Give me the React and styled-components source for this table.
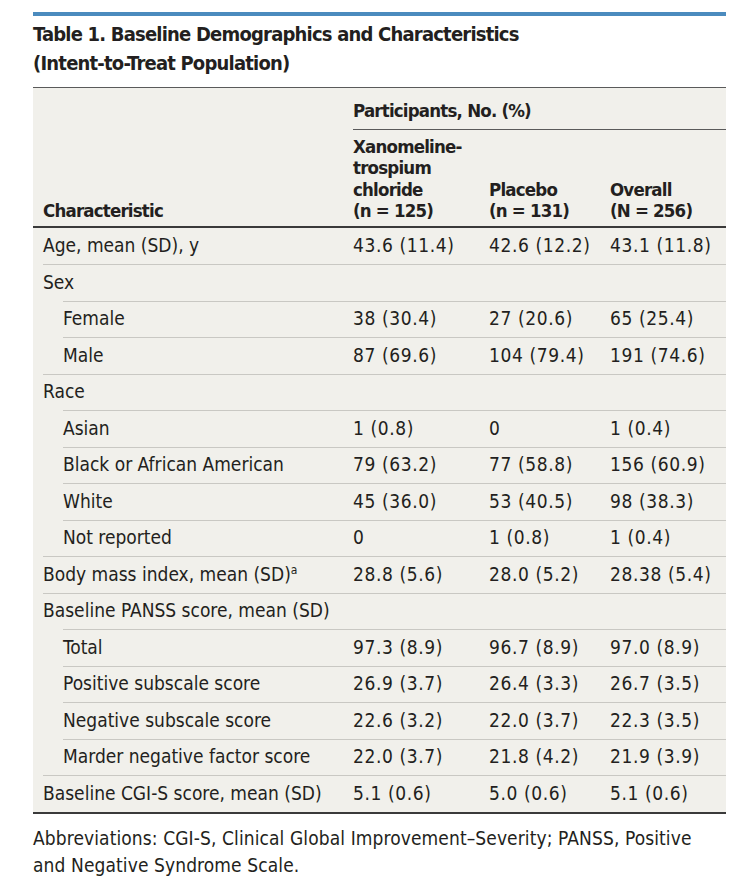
import React from 'react';
import styled, { createGlobalStyle } from 'styled-components';

const GlobalStyle = createGlobalStyle`
  html, body {
    margin: 0;
    padding: 0;
    background: #fff;
  }
  body {
    font-family: "DejaVu Sans Condensed", "DejaVu Sans", sans-serif;
    color: #231f20;
  }
`;

const Page = styled.div`
  width: 693px;
  padding: 12px 0 0 33px;
`;

const TopBar = styled.div`
  height: 4px;
  background: #4b8bbe;
`;

const Title = styled.h1`
  margin: 0;
  padding: 4px 0 9px;
  font-size: 20px;
  line-height: 29px;
  font-weight: bold;
  letter-spacing: -0.8px;
`;

const Table = styled.div`
  background: #f1f0eb;
  border-top: 1px solid #5a5a5a;
  border-bottom: 2px solid #3a3a3a;
  font-size: 19px;
`;

const Header = styled.div`
  display: grid;
  grid-template-columns: 310px 136px 121px 126px;
  grid-template-rows: auto auto;
  border-bottom: 2px solid #3a3a3a;
  font-weight: bold;
  font-size: 18.5px;
  letter-spacing: -0.8px;
`;

const HeadCell = styled.div`
  padding: 0 0 4px 10px;
  line-height: 21.5px;
  align-self: end;
`;

const CharHead = styled(HeadCell)`
  grid-row: 1 / span 2;
`;

const GroupHead = styled.div`
  grid-column: 2 / span 3;
  margin-left: 10px;
  padding: 12px 0 7px;
  line-height: 21.5px;
  border-bottom: 1px solid #5a5a5a;
`;

const ColHead = styled(HeadCell)`
  padding-top: 6px;
`;

const Row = styled.div`
  display: grid;
  grid-template-columns: ${p => (p.$sub ? '280px' : '300px')} 136px 121px 126px;
  margin-left: ${p => (p.$sub ? '30px' : '10px')};
  border-top: ${p => (p.$first ? 'none' : '1px solid #c9c8c3')};
  height: ${p => (p.$first ? '34.5px' : '33.5px')};
  padding-bottom: 2px;
  align-items: center;
  line-height: 22px;
  box-sizing: content-box;
`;

const Label = styled.div`
  white-space: nowrap;
`;

const Value = styled.div`
  padding-left: 10px;
  white-space: nowrap;
  letter-spacing: 0.6px;
`;

const Sup = styled.sup`
  font-size: 12px;
  line-height: 0;
  vertical-align: 7px;
`;

const Footnote = styled.p`
  margin: 0;
  padding-top: 11px;
  font-size: 19px;
  line-height: 27px;
  letter-spacing: 0.1px;
`;

const rows = [
  { label: 'Age, mean (SD), y', v: ['43.6 (11.4)', '42.6 (12.2)', '43.1 (11.8)'] },
  { label: 'Sex', v: ['', '', ''] },
  { label: 'Female', sub: true, v: ['38 (30.4)', '27 (20.6)', '65 (25.4)'] },
  { label: 'Male', sub: true, v: ['87 (69.6)', '104 (79.4)', '191 (74.6)'] },
  { label: 'Race', v: ['', '', ''] },
  { label: 'Asian', sub: true, v: ['1 (0.8)', '0', '1 (0.4)'] },
  { label: 'Black or African American', sub: true, v: ['79 (63.2)', '77 (58.8)', '156 (60.9)'] },
  { label: 'White', sub: true, v: ['45 (36.0)', '53 (40.5)', '98 (38.3)'] },
  { label: 'Not reported', sub: true, v: ['0', '1 (0.8)', '1 (0.4)'] },
  { label: 'Body mass index, mean (SD)', sup: 'a', v: ['28.8 (5.6)', '28.0 (5.2)', '28.38 (5.4)'] },
  { label: 'Baseline PANSS score, mean (SD)', v: ['', '', ''] },
  { label: 'Total', sub: true, v: ['97.3 (8.9)', '96.7 (8.9)', '97.0 (8.9)'] },
  { label: 'Positive subscale score', sub: true, v: ['26.9 (3.7)', '26.4 (3.3)', '26.7 (3.5)'] },
  { label: 'Negative subscale score', sub: true, v: ['22.6 (3.2)', '22.0 (3.7)', '22.3 (3.5)'] },
  { label: 'Marder negative factor score', sub: true, v: ['22.0 (3.7)', '21.8 (4.2)', '21.9 (3.9)'] },
  { label: 'Baseline CGI-S score, mean (SD)', v: ['5.1 (0.6)', '5.0 (0.6)', '5.1 (0.6)'] },
];

const App = () => {
  return (
    <Page>
      <GlobalStyle />
      <TopBar />
      <Title>
        Table 1. Baseline Demographics and Characteristics
        <br />
        (Intent-to-Treat Population)
      </Title>
      <Table>
        <Header>
          <CharHead>Characteristic</CharHead>
          <GroupHead>Participants, No. (%)</GroupHead>
          <ColHead>
            Xanomeline-
            <br />
            trospium
            <br />
            chloride
            <br />
            (n = 125)
          </ColHead>
          <ColHead>
            Placebo
            <br />
            (n = 131)
          </ColHead>
          <ColHead>
            Overall
            <br />
            (N = 256)
          </ColHead>
        </Header>
        {rows.map((r, i) => (
          <Row key={r.label} $sub={r.sub} $first={i === 0}>
            <Label>
              {r.label}
              {r.sup && <Sup>{r.sup}</Sup>}
            </Label>
            {r.v.map((val, j) => (
              <Value key={j}>{val}</Value>
            ))}
          </Row>
        ))}
      </Table>
      <Footnote>
        Abbreviations: CGI-S, Clinical Global Improvement–Severity; PANSS, Positive
        <br />
        and Negative Syndrome Scale.
      </Footnote>
    </Page>
  );
};

export default App;
